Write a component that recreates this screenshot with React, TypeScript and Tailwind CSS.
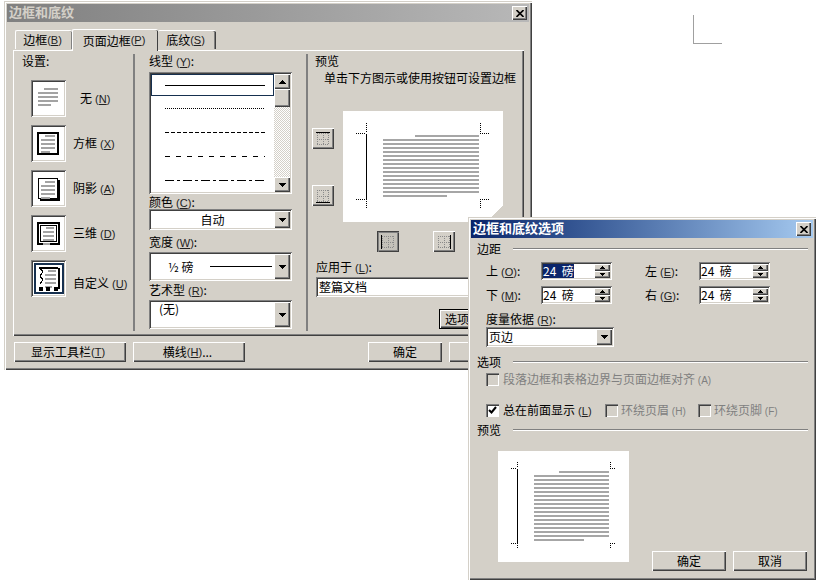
import React from "react";

const raised =
  "bg-[#d4d0c8] shadow-[inset_1px_1px_0_#fff,inset_-1px_-1px_0_#404040,inset_-2px_-2px_0_#808080]";
const sunken =
  "bg-white shadow-[inset_1px_1px_0_#808080,inset_-1px_-1px_0_#fff,inset_2px_2px_0_#404040,inset_-2px_-2px_0_#d4d0c8]";
const windowFrame =
  "absolute bg-[#d4d0c8] p-[3px] flex flex-col shadow-[inset_1px_1px_0_#d4d0c8,inset_2px_2px_0_#fff,inset_-1px_-1px_0_#404040,inset_-2px_-2px_0_#808080]";

const Arrow = ({ up = false, small = false }: { up?: boolean; small?: boolean }) => (
  <svg width={small ? 5 : 7} height={small ? 3 : 4} viewBox="0 0 7 4" shapeRendering="crispEdges">
    <polygon points={up ? "3.5,0 7,4 0,4" : "0,0 7,0 3.5,4"} fill="#000" />
  </svg>
);

const Key = ({ k, grey = false }: { k: string; grey?: boolean }) => (
  <span className={`font-['Liberation_Sans'] ${grey ? "text-[10px]" : "text-[11px] text-[#222]"}`}>
    {" "}(<span className={grey ? "" : "underline"}>{k}</span>)
  </span>
);

const Label = ({ text, k, after = "", className = "" }: { text: string; k: string; after?: string; className?: string }) => (
  <div className={`h-[14px] leading-[14px] whitespace-nowrap ${className}`}>
    {text}
    <Key k={k} />
    {after}
  </div>
);

const Button = ({ children, className = "" }: { children?: React.ReactNode; className?: string }) => (
  <div className={`${raised} flex items-center justify-center whitespace-nowrap ${className}`}>{children}</div>
);

const CloseBtn = () => (
  <div className={`${raised} w-[15px] h-[14px] flex items-center justify-center`}>
    <svg width="8" height="7" viewBox="0 0 8 7">
      <path d="M0.5 0 L7.5 7 M7.5 0 L0.5 7" stroke="#000" strokeWidth="1.6" />
    </svg>
  </div>
);

const Select = ({ children, className = "" }: { children?: React.ReactNode; className?: string }) => (
  <div className={`${sunken} flex justify-between items-center p-[2px] ${className}`}>
    <div className="flex-1 h-full relative min-w-0">{children}</div>
    <div className={`${raised} w-[16px] h-full flex items-center justify-center shrink-0`}>
      <Arrow />
    </div>
  </div>
);

type Kind = "none" | "box" | "shadow" | "three" | "custom";

const TextLines = ({ x, y, w }: { x: number; y: number; w: number }) => (
  <g fill="#a3a3a3">
    <rect x={x + w * 0.3} y={y} width={w * 0.7} height="2" />
    <rect x={x} y={y + 4} width={w} height="2" />
    <rect x={x} y={y + 8} width={w} height="2" />
    <rect x={x} y={y + 12} width={w} height="2" />
    <rect x={x} y={y + 16} width={w * 0.65} height="2" />
  </g>
);

const SettingIcon = ({ kind }: { kind: Kind }) => (
  <div className={`${sunken} w-[35px] h-[37px] shrink-0`}>
    <svg width="35" height="37" viewBox="0 0 35 37" shapeRendering="crispEdges">
      {kind === "none" && <TextLines x={7} y={8} w={20} />}
      {kind === "box" && (
        <>
          <rect x="7" y="8" width="20" height="21" fill="none" stroke="#000" strokeWidth="2" />
          <TextLines x={10} y={10} w={14} />
        </>
      )}
      {kind === "shadow" && (
        <>
          <rect x="7.5" y="8.5" width="19" height="20" fill="none" stroke="#000" strokeWidth="1" />
          <rect x="27" y="10" width="2" height="20" fill="#000" />
          <rect x="9" y="29" width="20" height="2" fill="#000" />
          <TextLines x={10} y={11} w={14} />
        </>
      )}
      {kind === "three" && (
        <>
          <rect x="7" y="8" width="21" height="21" fill="none" stroke="#000" strokeWidth="2" />
          <rect x="9.5" y="10.5" width="16" height="16" fill="none" stroke="#000" strokeWidth="1" />
          <TextLines x={12} y={12} w={11} />
        </>
      )}
      {kind === "custom" && (
        <>
          <rect x="4" y="4" width="28" height="29" fill="none" stroke="#16304f" strokeWidth="2.5" />
          <path d="M8 8 H27 M28 8 V25" stroke="#000" strokeWidth="1.2" fill="none" />
          <path d="M9 8 L12 12 L9 16 L12 20 L9 24" stroke="#000" strokeWidth="1" fill="none" />
          <TextLines x={14} y={10} w={11} />
          <rect x="8" y="27" width="4" height="4" fill="#000" />
          <rect x="15" y="27" width="4" height="4" fill="#000" />
          <rect x="23" y="27" width="4" height="4" fill="#000" />
          <rect x="27" y="24" width="2" height="5" fill="#000" />
        </>
      )}
    </svg>
  </div>
);

// preview sheet, sizes come from the dialog it sits in
const PageSvg = ({
  w,
  h,
  lx,
  rx,
  top,
  bottom,
  tick,
  tx,
  tr,
  short,
  first,
  count,
  notch = false,
}: {
  w: number;
  h: number;
  lx: number;
  rx: number;
  top: number;
  bottom: number;
  tick: number;
  tx: number;
  tr: number;
  short: number;
  first: number;
  count: number;
  notch?: boolean;
}) => {
  const dots = { stroke: "#000", strokeDasharray: "1 1", strokeWidth: 1 };
  return (
    <svg width={w} height={h} viewBox={`0 0 ${w} ${h}`} shapeRendering="crispEdges" className="bg-white block">
      <path d={`M${lx + 0.5} ${top - tick} V${top} M${lx - tick} ${top + 0.5} H${lx}`} {...dots} />
      <path d={`M${lx + 0.5} ${bottom} V${bottom + tick} M${lx - tick} ${bottom + 0.5} H${lx}`} {...dots} />
      <path d={`M${rx + 0.5} ${top - tick} V${top} M${rx} ${top + 0.5} H${rx + tick}`} {...dots} />
      <path d={`M${rx + 0.5} ${bottom} V${bottom + tick} M${rx} ${bottom + 0.5} H${rx + tick}`} {...dots} />
      <rect x={lx} y={top + 1} width="1" height={bottom - top - 1} fill="#000" />
      <rect x={tx + short} y={first - 4} width={tr - tx - short} height="2" fill="#a6a6a6" />
      {Array.from({ length: count }).map((_, i) => (
        <rect key={i} x={tx} y={first + i * 4} width={tr - tx} height="2" fill="#a6a6a6" />
      ))}
      <rect x={tx} y={first + count * 4} width={tr - tx - short} height="2" fill="#a6a6a6" />
      {notch && <polygon points={`${w},${h - 17} ${w},${h} ${w - 17},${h}`} fill="#d4d0c8" />}
    </svg>
  );
};

const EdgeBtn = ({ edge, pressed = false }: { edge: "top" | "bottom" | "left" | "right"; pressed?: boolean }) => (
  <div
    className={
      pressed
        ? "w-[22px] h-[21px] flex items-center justify-center bg-[#c4c1b9] shadow-[inset_1px_1px_0_#404040,inset_2px_2px_0_#808080,inset_-1px_-1px_0_#404040,inset_-2px_-2px_0_#808080]"
        : `${raised} w-[22px] h-[21px] flex items-center justify-center`
    }
  >
    <svg width="14" height="14" viewBox="0 0 14 14" shapeRendering="crispEdges">
      <path d="M1.5 1 V13 M7.5 1 V13 M12.5 1 V13 M1 1.5 H13 M1 7.5 H13 M1 12.5 H13" stroke="#8a8a8a" strokeDasharray="1 1" />
      {edge === "top" && <rect x="0" y="0" width="14" height="1" fill="#000" />}
      {edge === "bottom" && <rect x="0" y="13" width="14" height="1" fill="#000" />}
      {edge === "left" && <rect x="0" y="0" width="1" height="14" fill="#000" />}
      {edge === "right" && <rect x="13" y="0" width="1" height="14" fill="#000" />}
    </svg>
  </div>
);

const LineRow = ({ kind, selected = false }: { kind: string; selected?: boolean }) => (
  <div className={`shrink-0 flex items-center pl-[13px] ${selected ? "h-[22px] border border-[#16304f]" : "h-[24px] border border-transparent"}`}>
    <div className={`w-[100px] h-px ${kind}`} />
  </div>
);

const Spin = ({ value, selected = false }: { value: string; selected?: boolean }) => (
  <div className={`${sunken} w-[71px] h-[18px] flex items-center pl-[2px] pr-[2px]`}>
    <div className="flex-1 text-[12px] leading-[14px] whitespace-pre">
      <span className={selected ? "bg-[#0a246a] text-white inline-block w-[31px]" : "inline-block"}>{value}</span>
    </div>
    <div className="w-[16px] h-[14px] flex flex-col">
      <div className={`${raised} h-[7px] flex items-center justify-center`}>
        <Arrow up small />
      </div>
      <div className={`${raised} h-[7px] flex items-center justify-center`}>
        <Arrow small />
      </div>
    </div>
  </div>
);

const Check = ({ checked = false, disabled = false }: { checked?: boolean; disabled?: boolean }) => (
  <div
    className={`w-[13px] h-[13px] shrink-0 flex items-center justify-center shadow-[inset_1px_1px_0_#808080,inset_2px_2px_0_#404040,inset_-1px_-1px_0_#fff] ${
      disabled ? "bg-[#d4d0c8]" : "bg-white"
    }`}
  >
    {checked && (
      <svg width="9" height="8" viewBox="0 0 9 8">
        <path d="M1 4 L3.5 6.5 L8 1" fill="none" stroke="#000" strokeWidth="2" />
      </svg>
    )}
  </div>
);

const SectionHead = ({ text, className = "" }: { text: string; className?: string }) => (
  <div className={`flex items-center h-[14px] pl-[6px] ${className}`}>
    <span className="w-[36px] shrink-0 leading-[14px]">{text}</span>
    <div className="flex-1 h-[2px] bg-[#808080] border-b border-white mr-[5px]" />
  </div>
);

const settings: { kind: Kind; text: string; k: string; ml: string }[] = [
  { kind: "none", text: "无", k: "N", ml: "ml-[14px]" },
  { kind: "box", text: "方框", k: "X", ml: "ml-[7px]" },
  { kind: "shadow", text: "阴影", k: "A", ml: "ml-[7px]" },
  { kind: "three", text: "三维", k: "D", ml: "ml-[7px]" },
  { kind: "custom", text: "自定义", k: "U", ml: "ml-[7px] mt-[9px]" },
];

const BordersDialog = () => (
  <div className={`${windowFrame} left-[4px] top-[1px] w-[528px] h-[369px]`}>
    <div className="h-[18px] shrink-0 flex items-center justify-between pl-[2px] pr-[2px] bg-gradient-to-r from-[#808080] to-[#b8b8b8]">
      <span className="text-[#d4d0c8] font-bold text-[13px] leading-[15px] self-start">边框和底纹</span>
      <CloseBtn />
    </div>

    <div className="flex h-[28px] shrink-0 items-end pl-[8px]">
      <div className="w-[57px] h-[19px] mb-px pr-[3px] flex items-center justify-center border-t border-l border-white rounded-t-[2px] shadow-[inset_-1px_0_0_#808080]">
        边框<Key k="B" />
      </div>
      <div className="relative z-10 w-[86px] h-[22px] -mb-px pr-[3px] bg-[#d4d0c8] flex items-center justify-center border-t border-l border-white rounded-t-[2px] shadow-[inset_-1px_0_0_#404040]">
        页面边框<Key k="P" />
      </div>
      <div className="w-[58px] h-[19px] mb-px pr-[3px] flex items-center justify-center border-t border-white rounded-t-[2px] shadow-[inset_-1px_0_0_#404040,inset_-2px_0_0_#808080]">
        底纹<Key k="S" />
      </div>
    </div>

    <div className="ml-[6px] w-[511px] h-[286px] shrink-0 flex pt-[3px] pb-[5px] border-t border-l border-white shadow-[inset_-1px_-1px_0_#404040,inset_-2px_-2px_0_#808080]">
      <div className="w-[121px] shrink-0 pl-[8px] border-r-2 border-r-[#808080]">
        <div className="h-[14px] leading-[14px]">设置:</div>
        <div className="mt-[12px] flex flex-col gap-[8px] pl-[9px]">
          {settings.map((s) => (
            <div key={s.kind} className="flex items-center">
              <SettingIcon kind={s.kind} />
              <div className={`${s.ml} whitespace-nowrap`}>
                {s.text}
                <Key k={s.k} />
              </div>
            </div>
          ))}
        </div>
      </div>

      <div className="w-[173px] shrink-0 pl-[14px] border-r-2 border-r-[#808080]">
        <Label text="线型" k="Y" after=":" />
        <div className={`${sunken} mt-[4px] w-[143px] h-[122px] flex p-[2px]`}>
          <div className="flex-1 min-w-0 h-full overflow-hidden">
            <LineRow selected kind="bg-black" />
            <LineRow kind="bg-[repeating-linear-gradient(90deg,#000_0_1px,transparent_1px_2px)]" />
            <LineRow kind="bg-[repeating-linear-gradient(90deg,#000_0_4px,transparent_4px_6px)]" />
            <LineRow kind="bg-[repeating-linear-gradient(90deg,#000_0_5px,transparent_5px_11px)]" />
            <LineRow kind="bg-[repeating-linear-gradient(90deg,#000_0_9px,transparent_9px_12px,#000_12px_15px,transparent_15px_18px)]" />
          </div>
          <div className="w-[16px] h-full flex flex-col shrink-0 bg-[repeating-conic-gradient(#fff_0_25%,#d4d0c8_0_50%)] bg-[length:2px_2px]">
            <div className={`${raised} h-[15px] flex items-center justify-center`}>
              <Arrow up />
            </div>
            <div className={`${raised} h-[18px]`} />
            <div className="flex-1" />
            <div className={`${raised} h-[15px] flex items-center justify-center`}>
              <Arrow />
            </div>
          </div>
        </div>
        <Label text="颜色" k="C" after=":" className="mt-[1px]" />
        <Select className="w-[143px] h-[21px]">
          <div className="text-center leading-[17px]">自动</div>
        </Select>
        <Label text="宽度" k="W" after=":" className="mt-[5px]" />
        <Select className="mt-[3px] w-[143px] h-[29px]">
          <div className="flex items-center h-full pl-[17px]">
            <span className="w-[42px] whitespace-nowrap">½ 磅</span>
            <div className="w-[62px] h-px bg-black" />
          </div>
        </Select>
        <Label text="艺术型" k="R" after=":" className="mt-[2px]" />
        <Select className="mt-[3px] w-[143px] h-[29px]">
          <div className="pl-[8px] leading-[14px]">(无)</div>
        </Select>
      </div>

      <div className="flex-1 min-w-0 pl-[4px]">
        <div className="h-[14px] leading-[14px] ml-[3px]">预览</div>
        <div className="mt-[3px] ml-[12px] h-[14px] leading-[14px] whitespace-nowrap">单击下方图示或使用按钮可设置边框</div>
        <div className="mt-[26px] flex">
          <div className="w-[22px] flex flex-col gap-[36px] pt-[17px]">
            <EdgeBtn edge="top" />
            <EdgeBtn edge="bottom" />
          </div>
          <div className="ml-[9px]">
            <PageSvg w={160} h={111} lx={23} rx={137} top={22} bottom={88} tick={10} tx={40} tr={136} short={32} first={28} count={14} notch />
          </div>
        </div>
        <div className="mt-[9px] flex gap-[34px] pl-[65px]">
          <EdgeBtn edge="left" pressed />
          <EdgeBtn edge="right" />
        </div>
        <div className="ml-[4px] mt-[8px]">
          <Label text="应用于" k="L" after=":" />
          <div className={`${sunken} mt-[3px] w-[195px] h-[20px] pl-[3px] leading-[20px]`}>整篇文档</div>
        </div>
        <div className="mt-[12px] ml-[127px] w-[70px] border border-black">
          <Button className="h-[18px] !justify-start pl-[5px]">选项</Button>
        </div>
      </div>
    </div>

    <div className="mt-[6px] ml-[7px] flex">
      <Button className="w-[112px] h-[20px] pr-[4px]">
        显示工具栏<Key k="T" />
      </Button>
      <Button className="ml-[7px] w-[112px] h-[20px] pr-[3px]">
        横线<Key k="H" />...
      </Button>
      <Button className="ml-[123px] w-[74px] h-[20px]">确定</Button>
      <Button className="ml-[7px] w-[74px] h-[20px]" />
    </div>
  </div>
);

const OptionsDialog = () => (
  <div className={`${windowFrame} left-[468px] top-[217px] w-[348px] h-[363px]`}>
    <div className="h-[18px] shrink-0 flex items-center justify-between pl-[2px] pr-[2px] bg-gradient-to-r from-[#0a246a] to-[#a6caf0]">
      <span className="text-white font-bold text-[13px] leading-[15px] self-start">边框和底纹选项</span>
      <CloseBtn />
    </div>

    <SectionHead text="边距" className="mt-[4px]" />
    <div className="mt-[6px] pl-[15px] flex flex-col gap-[6px]">
      <div className="flex items-center">
        <Label text="上" k="O" after=":" className="w-[55px]" />
        <Spin value="24  磅" selected />
        <Label text="左" k="E" after=":" className="ml-[33px] w-[54px]" />
        <Spin value="24  磅" />
      </div>
      <div className="flex items-center">
        <Label text="下" k="M" after=":" className="w-[55px]" />
        <Spin value="24  磅" />
        <Label text="右" k="G" after=":" className="ml-[33px] w-[54px]" />
        <Spin value="24  磅" />
      </div>
    </div>
    <Label text="度量依据" k="R" after=":" className="mt-[8px] ml-[15px]" />
    <Select className="mt-[1px] ml-[15px] w-[128px] h-[20px] shrink-0">
      <div className="pl-[1px] leading-[16px]">页边</div>
    </Select>

    <SectionHead text="选项" className="mt-[8px]" />
    <div className="mt-[1px] pl-[15px] flex items-center text-[#808080] whitespace-nowrap">
      <Check disabled />
      <span className="ml-[4px]">
        段落边框和表格边界与页面边框对齐
        <Key k="A" grey />
      </span>
    </div>
    <div className="mt-[14px] pl-[15px] flex items-center whitespace-nowrap h-[16px]">
      <Check checked />
      <span className="ml-[4px] w-[102px]">
        总在前面显示
        <Key k="L" />
      </span>
      <Check disabled />
      <span className="ml-[3px] w-[77px] text-[#808080]">
        环绕页眉
        <Key k="H" grey />
      </span>
      <Check disabled />
      <span className="ml-[3px] text-[#808080]">
        环绕页脚
        <Key k="F" grey />
      </span>
    </div>
    <SectionHead text="预览" className="mt-[5px]" />
    <div className="mt-[14px] flex items-start pl-[27px]">
      <PageSvg w={131} h={111} lx={19} rx={112} top={17} bottom={92} tick={6} tx={36} tr={111} short={25} first={24} count={16} />
      <div className="ml-[23px] mt-[100px] flex gap-[7px]">
        <Button className="w-[74px] h-[20px]">确定</Button>
        <Button className="w-[74px] h-[20px]">取消</Button>
      </div>
    </div>
  </div>
);

const App = () => {
  return (
    <div className="relative w-[820px] h-[585px] bg-white overflow-hidden font-['Noto_Sans_CJK_SC',sans-serif] text-[12px] text-black">
      <div className="absolute left-[693px] top-[15px] w-[29px] h-[29px] border-l border-b border-[#a0a0a0]" />
      <BordersDialog />
      <OptionsDialog />
    </div>
  );
};

export default App;
